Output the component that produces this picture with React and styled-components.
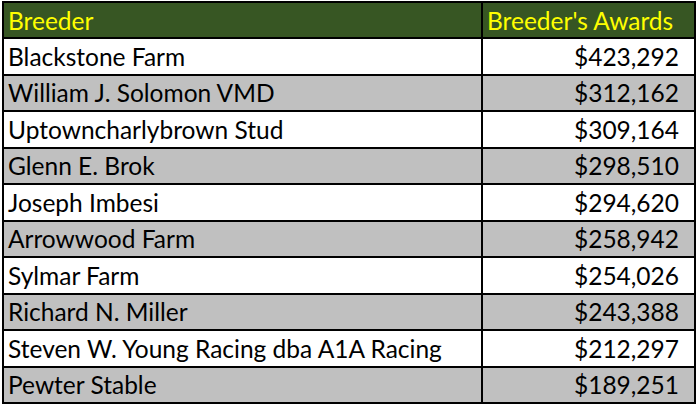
import React from 'react';
import styled, { createGlobalStyle } from 'styled-components';

const GlobalStyle = createGlobalStyle`
  body {
    margin: 0;
    background: #fff;
    font-family: Lato, 'Open Sans', sans-serif;
  }
`;

const Page = styled.div`
  padding: 1px 0 0 2px;
`;

const Table = styled.table`
  border-collapse: collapse;
  width: 694px;
  table-layout: fixed;
  font-size: 24.5px;
  color: #000;

  col.name {
    width: 479px;
  }
`;

const HeadCell = styled.th`
  background: #375623;
  color: #ffff00;
  font-weight: 400;
  text-align: left;
  height: 34px;
  padding: 0 4px;
  border: 2px solid #000;
  white-space: nowrap;
`;

const Row = styled.tr`
  background: ${({ $shaded }) => ($shaded ? '#c0c0c0' : '#fff')};
`;

const Cell = styled.td`
  height: 34.5px;
  padding: 0 ${({ $right }) => ($right ? '15px' : '4px')};
  text-align: ${({ $right }) => ($right ? 'right' : 'left')};
  border: 2px solid #000;
  white-space: nowrap;
`;

const breeders = [
  ['Blackstone Farm', '$423,292'],
  ['William J. Solomon VMD', '$312,162'],
  ['Uptowncharlybrown Stud', '$309,164'],
  ['Glenn E. Brok', '$298,510'],
  ['Joseph Imbesi', '$294,620'],
  ['Arrowwood Farm', '$258,942'],
  ['Sylmar Farm', '$254,026'],
  ['Richard N. Miller', '$243,388'],
  ['Steven W. Young Racing dba A1A Racing', '$212,297'],
  ['Pewter Stable', '$189,251'],
];

const App = () => (
  <Page>
    <GlobalStyle />
    <Table>
      <colgroup>
        <col className="name" />
        <col />
      </colgroup>
      <thead>
        <tr>
          <HeadCell>Breeder</HeadCell>
          <HeadCell>Breeder's Awards</HeadCell>
        </tr>
      </thead>
      <tbody>
        {breeders.map(([name, award], i) => (
          <Row key={name} $shaded={i % 2 === 1}>
            <Cell>{name}</Cell>
            <Cell $right>{award}</Cell>
          </Row>
        ))}
      </tbody>
    </Table>
  </Page>
);

export default App;
